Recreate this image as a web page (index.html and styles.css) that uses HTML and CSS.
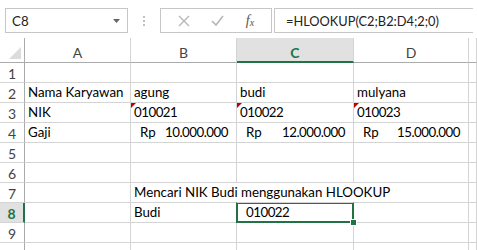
FILE: index.html
```html
<!DOCTYPE html>
<html lang="id">
<head>
    <meta charset="UTF-8">
    <title>HLOOKUP</title>
    <link rel="stylesheet" href="styles.css">
</head>
<body>

<div class="formula-bar">
    <div class="name-box">
        <span>C8</span>
        <svg class="drop" width="7" height="4" viewBox="0 0 7 4"><path d="M0 0h7L3.5 4z" fill="#666"/></svg>
    </div>
    <div class="grip">
        <i></i><i></i><i></i>
    </div>
    <div class="fx-buttons">
        <svg width="12" height="12" viewBox="0 0 12 12"><path d="M1 1l10 10M11 1L1 11" stroke="#b5b5b5" stroke-width="1.3"/></svg>
        <svg width="13" height="11" viewBox="0 0 13 11"><path d="M1 6l4 4 7-9" stroke="#b5b5b5" stroke-width="1.6" fill="none"/></svg>
        <span class="fx">f<sub>x</sub></span>
    </div>
    <div class="formula-input">=HLOOKUP(C2;B2:D4;2;0)</div>
</div>

<div class="sheet">
    <div class="hd corner"><span class="tri"></span></div>
    <div class="hd col">A</div>
    <div class="hd col">B</div>
    <div class="hd col sel">C</div>
    <div class="hd col">D</div>
    <div class="hd col"></div>

    <div class="hd row">1</div>
    <div class="c"></div><div class="c"></div><div class="c"></div><div class="c"></div><div class="c"></div>

    <div class="hd row">2</div>
    <div class="c">Nama Karyawan</div><div class="c">agung</div><div class="c">budi</div><div class="c">mulyana</div><div class="c"></div>

    <div class="hd row">3</div>
    <div class="c">NIK</div><div class="c flag num">010021</div><div class="c flag num">010022</div><div class="c flag num">010023</div><div class="c"></div>

    <div class="hd row">4</div>
    <div class="c">Gaji</div>
    <div class="c money"><span>Rp</span><span class="num">10.000.000</span></div>
    <div class="c money"><span>Rp</span><span class="num">12.000.000</span></div>
    <div class="c money"><span>Rp</span><span class="num">15.000.000</span></div>
    <div class="c"></div>

    <div class="hd row">5</div>
    <div class="c"></div><div class="c"></div><div class="c"></div><div class="c"></div><div class="c"></div>

    <div class="hd row">6</div>
    <div class="c"></div><div class="c"></div><div class="c"></div><div class="c"></div><div class="c"></div>

    <div class="hd row">7</div>
    <div class="c"></div><div class="c spill">Mencari NIK Budi menggunakan HLOOKUP</div><div class="c spill"></div><div class="c"></div><div class="c"></div>

    <div class="hd row sel">8</div>
    <div class="c"></div><div class="c">Budi</div><div class="c active num">010022<span class="handle"></span></div><div class="c"></div><div class="c"></div>

    <div class="hd row">9</div>
    <div class="c"></div><div class="c"></div><div class="c"></div><div class="c"></div><div class="c"></div>

    <div class="hd row"></div>
    <div class="c"></div><div class="c"></div><div class="c"></div><div class="c"></div><div class="c"></div>
</div>

</body>
</html>
```

FILE: styles.css
```css
body {
    margin: 0;
    background: #fff;
    font-family: Lato, "Liberation Sans", sans-serif;
    font-size: 13.3px;
    color: #000;
    overflow: hidden;
}
/* Formula bar */
.formula-bar {
    display: flex;
    align-items: center;
    height: 25px;
    padding: 8px 4px 5px 5px;
}
.name-box {
    box-sizing: border-box;
    width: 123px;
    height: 25px;
    border: 1px solid #c6c6c6;
    display: flex;
    align-items: center;
    justify-content: space-between;
    padding: 0 7px 0 6px;
    color: #222;
}
.grip {
    width: 32px;
    display: flex;
    flex-direction: column;
    align-items: center;
    gap: 2px;
}
.grip i {
    width: 2px;
    height: 2px;
    background: #c0c0c0;
}
.fx-buttons {
    box-sizing: border-box;
    width: 112px;
    height: 25px;
    border: 1px solid #c6c6c6;
    display: flex;
    align-items: center;
    justify-content: space-around;
    padding: 0 6px 0 6px;
}
.fx {
    font-family: "Liberation Serif", serif;
    font-style: italic;
    font-size: 14px;
    color: #555;
}
.fx sub {
    font-size: 10px;
    vertical-align: -1px;
}
.formula-input {
    box-sizing: border-box;
    flex: 1;
    margin-left: 2px;
    height: 25px;
    border: 1px solid #c6c6c6;
    border-right: none;
    display: flex;
    align-items: center;
    padding-left: 11px;
    font-size: 12.8px;
    color: #222;
}
/* Sheet */
.sheet {
    display: grid;
    grid-template-columns: 25px 106px 106px 117px 115px 1fr;
    grid-template-rows: 25px repeat(10, 20px);
}
.sheet > div {
    box-sizing: border-box;
    border-right: 1px solid #d4d4d4;
    border-bottom: 1px solid #d4d4d4;
}
.hd {
    color: #444;
    display: flex;
    align-items: center;
    justify-content: center;
    font-size: 14px;
}
.col {
    border-bottom-color: #ababab !important;
    padding-top: 5px;
}
.corner {
    border-bottom-color: #ababab !important;
    border-right-color: #ababab !important;
    position: relative;
}
.tri {
    position: absolute;
    right: 3px;
    bottom: 3px;
    width: 0;
    height: 0;
    border-left: 12px solid transparent;
    border-bottom: 12px solid #dcdcdc;
}
.row {
    border-right-color: #ababab !important;
    padding-top: 2px;
}
.hd.sel {
    background: #e1e1e1;
    color: #217346;
    font-weight: bold;
}
.col.sel {
    border-bottom: 2px solid #217346 !important;
    padding-top: 6px;
}
.row.sel {
    border-right: 2px solid #217346 !important;
}
.c {
    display: flex;
    align-items: flex-end;
    padding: 0 3px 2px 3px;
    white-space: nowrap;
    position: relative;
}
.num {
    letter-spacing: -0.5px;
}
.spill {
    overflow: visible;
    border-right-color: transparent !important;
    z-index: 1;
}
.money {
    justify-content: space-between;
    padding: 0 8px 2px 9px;
}
.flag::before {
    content: "";
    position: absolute;
    top: 0;
    left: 0;
    border-top: 5px solid #c00000;
    border-right: 5px solid transparent;
}
.active {
    padding-left: 9px;
}
.active::after {
    content: "";
    position: absolute;
    left: -1px;
    top: -1px;
    right: -1px;
    bottom: -1px;
    border: 2px solid #217346;
}
.handle {
    position: absolute;
    right: -4px;
    bottom: -4px;
    width: 5px;
    height: 5px;
    background: #217346;
    border: 1px solid #fff;
    z-index: 2;
}
```
